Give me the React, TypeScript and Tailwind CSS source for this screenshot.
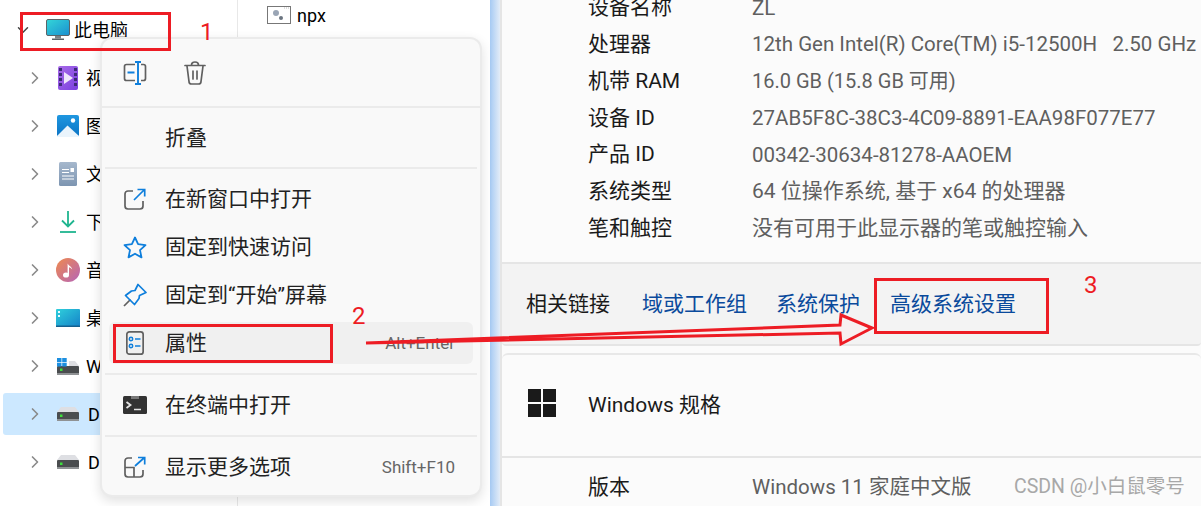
import React from 'react';
import { ChevronDown, ChevronRight } from 'lucide-react';

const MonitorIcon = () => (
  <svg width="24" height="22" viewBox="0 0 24 22">
    <defs>
      <linearGradient id="mon" x1="0" y1="0" x2="1" y2="1">
        <stop offset="0" stopColor="#33d6d8" />
        <stop offset="1" stopColor="#1b8fd0" />
      </linearGradient>
    </defs>
    <rect x="0.5" y="0.5" width="23" height="16" rx="1.5" fill="url(#mon)" stroke="#5b6468" />
    <rect x="9" y="17" width="6" height="2.5" fill="#7b8488" />
    <rect x="6" y="19.5" width="12" height="1.5" fill="#5b6468" />
  </svg>
);

const VideoIcon = () => (
  <svg width="22" height="24" viewBox="0 0 22 24">
    <defs>
      <linearGradient id="vid" x1="0" y1="0" x2="1" y2="1">
        <stop offset="0" stopColor="#a86be8" />
        <stop offset="1" stopColor="#7a3fe0" />
      </linearGradient>
    </defs>
    <rect x="1" width="20" height="24" rx="2" fill="url(#vid)" />
    {[2, 7, 12, 17].map(y => (
      <g key={y}>
        <rect x="2" y={y} width="3" height="3" fill="#3d2a78" />
        <rect x="17" y={y} width="3" height="3" fill="#3d2a78" />
      </g>
    ))}
    <path d="M7 6l9 6-9 6z" fill="#efe6fb" />
  </svg>
);

const ImageIcon = () => (
  <svg width="22" height="22" viewBox="0 0 22 22">
    <defs>
      <linearGradient id="pic" x1="0" y1="0" x2="0" y2="1">
        <stop offset="0" stopColor="#1f97e0" />
        <stop offset="1" stopColor="#0b73c4" />
      </linearGradient>
    </defs>
    <rect width="22" height="22" rx="2" fill="url(#pic)" />
    <circle cx="16" cy="5.5" r="2.2" fill="#fff" />
    <path d="M0 21l10.5-10.5L22 21v1H0z" fill="#eaf4fc" />
  </svg>
);

const DocIcon = () => (
  <svg width="18" height="24" viewBox="0 0 18 24">
    <defs>
      <linearGradient id="doc" x1="0" y1="0" x2="0" y2="1">
        <stop offset="0" stopColor="#a6b8cd" />
        <stop offset="1" stopColor="#7d95b1" />
      </linearGradient>
    </defs>
    <rect width="18" height="24" rx="1.5" fill="url(#doc)" />
    <path d="M3 7.5h7M3 10.5h7M3 14h12M3 17h12" stroke="#fff" strokeWidth="1" />
    <rect x="11.5" y="6" width="3.5" height="4" fill="#fff" />
  </svg>
);

const DownloadIcon = () => (
  <svg width="16" height="22" viewBox="0 0 16 22" fill="none" stroke="#1fb58f" strokeWidth="1.8">
    <path d="M8 0v15M2 9.5l6 6 6-6" />
    <path d="M0 21h16" />
  </svg>
);

const MusicIcon = () => (
  <svg width="24" height="24" viewBox="0 0 24 24">
    <defs>
      <linearGradient id="mus" x1="0" y1="0" x2="1" y2="1">
        <stop offset="0" stopColor="#ef8a4e" />
        <stop offset="1" stopColor="#b565b8" />
      </linearGradient>
    </defs>
    <circle cx="12" cy="12" r="12" fill="url(#mus)" />
    <ellipse cx="10" cy="17" rx="3" ry="2.6" fill="#fff" />
    <path d="M11.6 17V5.5c1 2.5 4.4 3 4.6 6-1.2-1.6-2.6-2-3.2-2.2V17z" fill="#fff" />
  </svg>
);

const DesktopIcon = () => (
  <svg width="24" height="18" viewBox="0 0 24 18">
    <defs>
      <linearGradient id="dsk" x1="0" y1="0" x2="1" y2="1">
        <stop offset="0" stopColor="#2fd0dc" />
        <stop offset="1" stopColor="#1582c8" />
      </linearGradient>
    </defs>
    <rect width="24" height="17.5" rx="1" fill="url(#dsk)" />
    <rect x="2" y="2" width="2" height="2" fill="#e8fbff" />
    <rect x="2" y="6" width="2" height="2" fill="#e8fbff" />
    <rect y="16.5" width="24" height="1.5" fill="#14608f" />
  </svg>
);

const DriveIcon = () => (
  <svg width="22" height="14" viewBox="0 0 22 14">
    <path d="M4 0h14l4 5H0z" fill="#dedfe3" />
    <rect y="5" width="22" height="9" rx="1" fill="#4a4d4f" />
    <rect y="12" width="22" height="2" fill="#8f9294" />
    <rect x="3" y="7.5" width="2.5" height="2.5" fill="#3ce03c" />
  </svg>
);

const WinDriveIcon = () => (
  <svg width="22" height="17" viewBox="0 0 22 17">
    <path d="M12 3h6l4 5H12z" fill="#dedfe3" />
    <rect x="0" y="8" width="22" height="9" rx="1" fill="#4a4d4f" />
    <rect y="15" width="22" height="2" fill="#8f9294" />
    <rect x="3" y="10.5" width="2.5" height="2.5" fill="#3ce03c" />
    <rect width="4.5" height="4" fill="#1c8fe0" />
    <rect x="5.2" width="4.5" height="4" fill="#1c8fe0" />
    <rect y="4.7" width="4.5" height="3.8" fill="#1c8fe0" />
    <rect x="5.2" y="4.7" width="4.5" height="3.8" fill="#1c8fe0" />
  </svg>
);

const RenameIcon = () => (
  <svg width="24" height="24" viewBox="0 0 24 24" fill="none">
    <path d="M12 3.5H3.5a2 2 0 0 0-2 2v12a2 2 0 0 0 2 2H12M18 3.5h2.5a2 2 0 0 1 2 2v12a2 2 0 0 1-2 2H18" stroke="#606060" strokeWidth="1.7" />
    <path d="M15 1v22M12 1h6M12 23h6M4.5 11.500h7" stroke="#0f7fdc" strokeWidth="1.900" />
  </svg>
);

const TrashIcon = () => (
  <svg width="22" height="24" viewBox="0 0 22 24" fill="none" stroke="#606060" strokeWidth="1.700" strokeLinecap="round">
    <path d="M1 4.500h20M7.500 4C7.500 2 9 1 11 1s3.500 1 3.500 3" />
    <path d="M3 5l2 15.500A2.500 2.500 0 0 0 7.500 23h7a2.500 2.500 0 0 0 2.500-2.500L19 5" />
    <path d="M9 10v8M13 10v8" />
  </svg>
);

const OpenIcon = () => (
  <svg width="22" height="22" viewBox="0 0 22 22" fill="none" strokeWidth="1.700">
    <path d="M9 3H4a3 3 0 0 0-3 3v12a3 3 0 0 0 3 3h12a3 3 0 0 0 3-3v-5" stroke="#606060" />
    <path d="M10 12L20.500 1.500M13.500 1.500h7.200v7" stroke="#0f7fdc" />
  </svg>
);

const StarIcon = () => (
  <svg width="24" height="23" viewBox="0 0 24 23" fill="none">
    <path d="M12 1.500l3.100 6.700 7.400.9-5.500 5 1.500 7.300-6.500-3.700-6.500 3.700 1.500-7.300-5.500-5 7.400-.9z" stroke="#0f7fdc" strokeWidth="1.800" strokeLinejoin="round" />
  </svg>
);

const PinIcon = () => (
  <svg width="24" height="24" viewBox="0 0 24 24" fill="none" strokeWidth="1.700">
    <path d="M1 23l6.500-6.500" stroke="#606060" />
    <path d="M15 1.500l8 8-6.500 3-.5 3-4.500 6-9-9 6-4.500 3.500-.5z" stroke="#0f7fdc" strokeLinejoin="round" />
  </svg>
);

const PropsIcon = () => (
  <svg width="18" height="24" viewBox="0 0 18 24" fill="none">
    <rect x="0.850" y="0.850" width="16.300" height="22.300" rx="2.500" stroke="#606060" strokeWidth="1.700" />
    <circle cx="5" cy="8" r="1.700" stroke="#0f7fdc" strokeWidth="1.500" />
    <circle cx="5" cy="15" r="1.700" stroke="#0f7fdc" strokeWidth="1.500" />
    <path d="M9 8h5.500M9 15h5.500" stroke="#0f7fdc" strokeWidth="1.600" />
  </svg>
);

const TerminalIcon = () => (
  <svg width="24" height="18" viewBox="0 0 24 18">
    <rect width="24" height="18" rx="1.500" fill="#333" />
    <rect x="8" width="8" height="3" fill="#777" />
    <path d="M3.500 6l4 3-4 3" fill="none" stroke="#e4e4e4" strokeWidth="1.800" />
    <path d="M11 13.500h7" stroke="#e4e4e4" strokeWidth="1.600" />
  </svg>
);

const MoreIcon = () => (
  <svg width="22" height="22" viewBox="0 0 22 22" fill="none" strokeWidth="1.700">
    <path d="M8 2H4a3 3 0 0 0-3 3v13a3 3 0 0 0 3 3h12a3 3 0 0 0 3-3v-4M1 11.500h9v9.500" stroke="#606060" />
    <path d="M11 10l9.500-8.500M14 1.500h6.700v7" stroke="#0f7fdc" />
  </svg>
);

const treeItems = [
  { label: '视频', icon: <VideoIcon />, labelClass: 'ml-[5px]' },
  { label: '图片', icon: <ImageIcon />, labelClass: 'ml-[5px]' },
  { label: '文档', icon: <DocIcon />, labelClass: 'ml-[5px]' },
  { label: '下载', icon: <DownloadIcon />, labelClass: 'ml-[5px]' },
  { label: '音乐', icon: <MusicIcon />, labelClass: 'ml-[5px]' },
  { label: '桌面', icon: <DesktopIcon />, labelClass: 'ml-[5px]' },
  { label: 'Windows (C:)', icon: <WinDriveIcon />, labelClass: 'ml-[5px]' },
  { label: 'Data (D:)', icon: <DriveIcon />, labelClass: 'ml-[7px]', selected: true },
  { label: 'Data (E:)', icon: <DriveIcon />, labelClass: 'ml-[7px]' },
];

const specs = [
  { name: '设备名称', value: 'ZL', size: 'text-[20.500px]' },
  { name: '处理器', value: '12th Gen Intel(R) Core(TM) i5-12500H   2.50 GHz', size: 'text-[20.500px]' },
  { name: '机带 RAM', value: '16.0 GB (15.8 GB 可用)', size: 'text-[20px]' },
  { name: '设备 ID', value: '27AB5F8C-38C3-4C09-8891-EAA98F077E77', size: 'text-[20.500px]' },
  { name: '产品 ID', value: '00342-30634-81278-AAOEM', size: 'text-[20.500px]' },
  { name: '系统类型', value: '64 位操作系统, 基于 x64 的处理器', size: 'text-[21px]' },
  { name: '笔和触控', value: '没有可用于此显示器的笔或触控输入', size: 'text-[21px]' },
];

const MenuRow = ({ icon, label, shortcut, active, className }: {
  icon?: React.ReactNode;
  label: string;
  shortcut?: string;
  active?: boolean;
  className?: string;
}) => (
  <div className={`mx-[7px] flex items-center ${className ?? 'h-[48px]'}`}>
    <div className={`flex h-[42px] flex-1 items-center rounded-[6px] pr-[18px] ${active ? 'bg-[#f0f0f0]' : ''}`}>
      <div className="ml-[14px] mr-[18px] flex w-[24px] justify-center">{icon}</div>
      <span className="pt-[2px] text-[21px] text-[#222]">{label}</span>
      {shortcut && <span className="ml-auto pt-[2px] text-[17px] text-[#666]">{shortcut}</span>}
    </div>
  </div>
);

const Sep = () => <div className="mx-[3px] h-[2px] bg-[#ebebeb]" />;

const App: React.FC = () => {
  return (
    <div className="relative flex h-[506px] w-[1201px] overflow-hidden bg-white [font-family:'Roboto','Noto_Sans_CJK_SC',sans-serif]">
      {/* explorer */}
      <div className="flex h-full w-[490px] shrink-0">
        <div className="w-[238px] shrink-0 border-r border-[#e8e8e8] pt-[6px] text-[18px] text-black">
          <div className="flex h-[48px] items-center">
            <ChevronDown className="ml-[14px] h-[18px] w-[18px] text-[#444]" />
            <div className="ml-[14px]"><MonitorIcon /></div>
            <span className="ml-[4px]">此电脑</span>
          </div>
          {treeItems.map(item => (
            <div key={item.label} className="h-[48px] py-[3px] pl-[3px]">
              <div className={`flex h-[42px] items-center rounded-[3px] ${item.selected ? 'bg-[#cce8ff]' : ''}`}>
                <ChevronRight className="ml-[22px] h-[20px] w-[20px] text-[#8a8a8a]" />
                <div className="ml-[10px] flex w-[26px] justify-center">{item.icon}</div>
                <span className={`whitespace-nowrap ${item.labelClass}`}>{item.label}</span>
              </div>
            </div>
          ))}
        </div>
        <div className="flex h-[30px] items-center pl-[29px] text-[18px] text-black">
          <svg width="24" height="18" viewBox="0 0 24 18" className="mr-[6px]">
            <rect x="0.500" y="0.500" width="23" height="17" fill="#fff" stroke="#777" />
            <circle cx="9" cy="7" r="3" fill="#9aa5b5" />
            <circle cx="14" cy="12" r="2" fill="#6b7480" />
            <path d="M17 2h5" stroke="#bbb" strokeDasharray="1 1" />
          </svg>
          npx
        </div>
      </div>

      {/* blue stripe */}
      <div className="h-full w-[10px] shrink-0 bg-gradient-to-r from-[#a6caf3] to-[#e3ecf7]" />

      {/* settings */}
      <div className="h-full flex-1 border-l-2 border-[#e5e5e5] bg-[#fbfbfb]">
        <div className="-mt-[10.500px] border-b-2 border-[#e5e5e5] pb-[14.500px] pl-[86px]">
          {specs.map(spec => (
            <div key={spec.name} className="flex h-[36.800px] items-center whitespace-pre">
              <span className="w-[164px] shrink-0 text-[21px] text-[#1a1a1a]">{spec.name}</span>
              <span className={`text-[#5f5f5f] ${spec.size}`}>{spec.value}</span>
            </div>
          ))}
        </div>
        <div className="flex h-[82px] items-center rounded-b-[4px] border-b-2 border-[#e5e5e5] bg-[#f3f3f3] pl-[24px] pt-[2px] text-[21px]">
          <span className="text-[#1a1a1a]">相关链接</span>
          <span className="ml-[32px] text-[#0a4a9c]">域或工作组</span>
          <span className="ml-[29px] text-[#0a4a9c]">系统保护</span>
          <span className="ml-[30px] text-[#0a4a9c]">高级系统设置</span>
        </div>
        <div className="mt-[7px] rounded-t-[6px] border-t-2 border-[#e8e8e8] bg-[#fbfbfb]">
          <div className="flex h-[103px] items-center border-b-2 border-[#e5e5e5] pb-[4px] pl-[26px]">
            <div className="grid h-[28px] w-[28px] grid-cols-2 gap-[2px]">
              <div className="bg-[#1a1a1a]" />
              <div className="bg-[#1a1a1a]" />
              <div className="bg-[#1a1a1a]" />
              <div className="bg-[#1a1a1a]" />
            </div>
            <span className="ml-[32px] mt-[6px] text-[21px] text-[#1a1a1a]">Windows 规格</span>
          </div>
          <div className="flex h-[58px] items-center pl-[86px] pt-[2px] text-[21px]">
            <span className="w-[164px] shrink-0 text-[#1a1a1a]">版本</span>
            <span className="text-[20.500px] text-[#5f5f5f]">Windows 11 家庭中文版</span>
          </div>
        </div>
      </div>

      {/* context menu */}
      <div className="absolute left-[100px] top-[37px] h-[460px] w-[382px] overflow-hidden rounded-[12px] border-2 border-[#ebebeb] bg-[#f9f9f9] shadow-[0_4px_12px_rgba(0,0,0,0.12)]">
        <div className="flex h-[67px] items-center gap-[37px] pl-[21px]">
          <RenameIcon />
          <TrashIcon />
        </div>
        <div className="h-[2px] bg-[#ebebeb]" />
        <MenuRow label="折叠" className="h-[59px]" />
        <Sep />
        <div className="py-[6px]">
          <MenuRow icon={<OpenIcon />} label="在新窗口中打开" />
          <MenuRow icon={<StarIcon />} label="固定到快速访问" />
          <MenuRow icon={<PinIcon />} label="固定到“开始”屏幕" />
          <MenuRow icon={<PropsIcon />} label="属性" shortcut="Alt+Enter" active />
        </div>
        <Sep />
        <MenuRow icon={<TerminalIcon />} label="在终端中打开" className="h-[60px]" />
        <Sep />
        <MenuRow icon={<MoreIcon />} label="显示更多选项" shortcut="Shift+F10" className="h-[58px] pt-[2px]" />
      </div>

      {/* red annotations */}
      <div className="absolute left-[20px] top-[12px] h-[39px] w-[151px] border-[3px] border-[#ed1c24]" />
      <div className="absolute left-[113px] top-[324px] h-[39px] w-[220px] border-[3px] border-[#ed1c24]" />
      <div className="absolute left-[874px] top-[278px] h-[56px] w-[175px] border-[3px] border-[#ed1c24]" />
      <span className="absolute left-[200px] top-[17px] text-[24px] leading-[30px] text-[#ed1c24]">1</span>
      <span className="absolute left-[352px] top-[301px] text-[24px] leading-[30px] text-[#ed1c24]">2</span>
      <span className="absolute left-[1084px] top-[270px] text-[24px] leading-[30px] text-[#ed1c24]">3</span>
      <svg className="absolute left-0 top-0" width="1201" height="506" fill="none">
        <path d="M366 343L840 325L841 315L872 328L841 344L840 333Z" fill="#f7f0f0" stroke="#ed1c24" strokeWidth="3" />
      </svg>

      <span className="absolute left-[1014px] top-[473px] text-[19.500px] leading-[28px] text-[#a8a8a8]">CSDN @小白鼠零号</span>
    </div>
  );
};

export default App;
